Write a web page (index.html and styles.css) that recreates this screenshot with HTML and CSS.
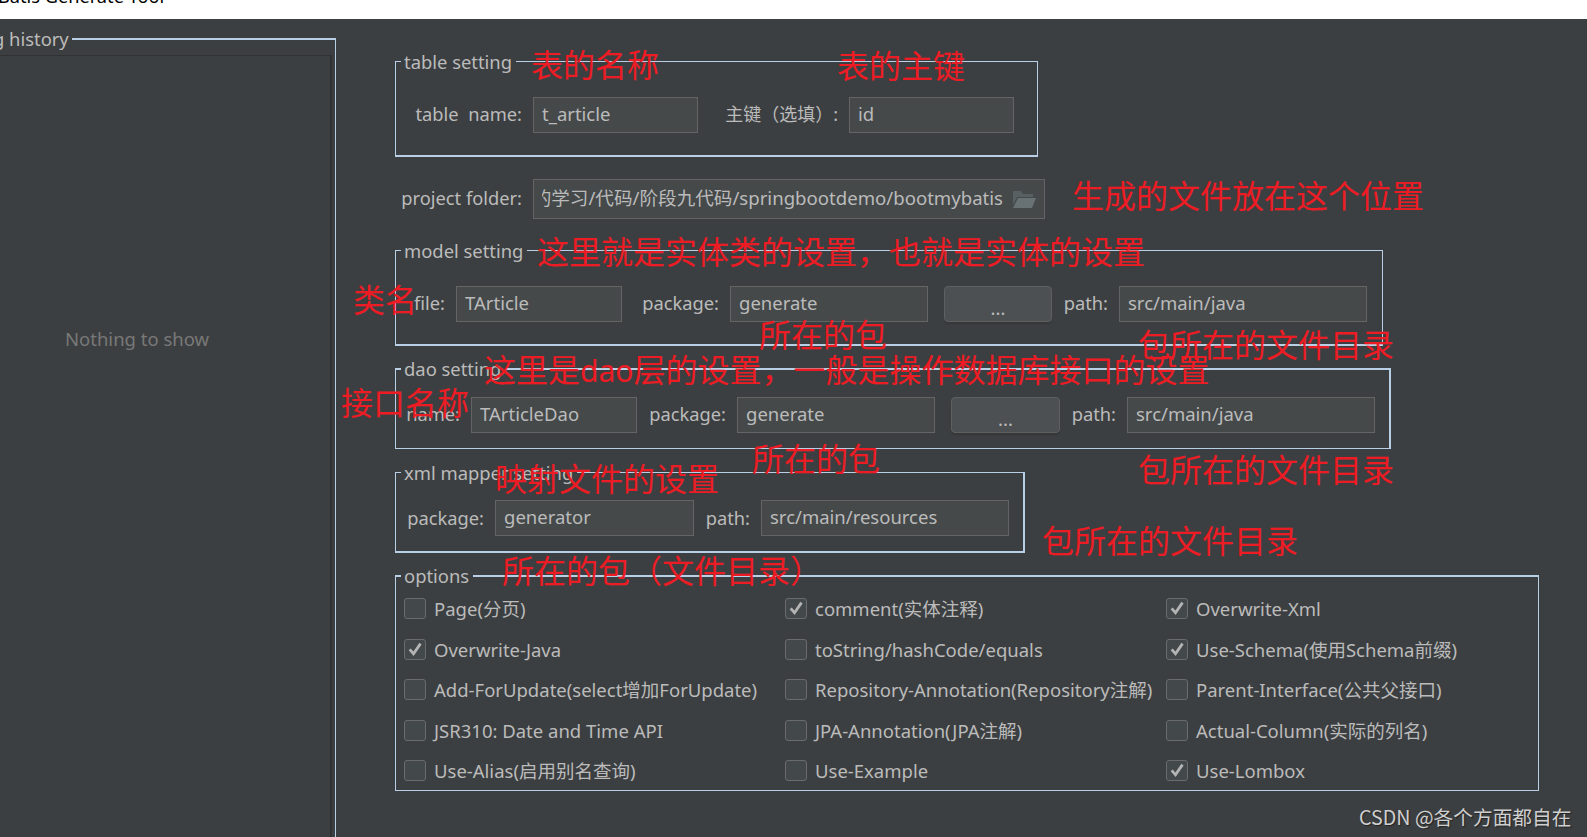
FILE: index.html
```html
<!DOCTYPE html>
<html lang="zh-CN">
<head>
    <meta charset="UTF-8">
    <title>MyBatis Generate Tool</title>
    <link rel="stylesheet" href="styles.css">
</head>
<body>
    <svg width="0" height="0" class="defs">
        <symbol id="tick" viewBox="0 0 21 21">
            <path d="M5.2 10.4 L9 14.8 L16 4.6" fill="none" stroke="#b4b4b4" stroke-width="2.8"/>
        </symbol>
    </svg>

    <div class="titlebar"><span>Batis Generate Tool</span></div>

    <div class="window">
        <div class="sidebar">
            <fieldset class="history">
                <legend>g history</legend>
                <div class="history-list">Nothing to show</div>
            </fieldset>
        </div>

        <div class="main">
            <fieldset class="table-setting">
                <legend>table setting</legend>
                <div class="row">
                    <label>table&nbsp; name:</label>
                    <input type="text" class="name" value="t_article">
                    <label class="key">主键（选填）:</label>
                    <input type="text" class="name" value="id">
                </div>
            </fieldset>

            <div class="row project">
                <label>project folder:</label>
                <div class="folder">
                    <div class="folder-path"><span>的学习/代码/阶段九代码/springbootdemo/bootmybatis</span></div>
                    <svg width="23" height="17" viewBox="0 0 23 17">
                        <path d="M0 14V0h8l2 3h10v3H4z" fill="#596063"/>
                        <path d="M5 7H23l-4 10H0z" fill="#687174"/>
                    </svg>
                </div>
            </div>

            <fieldset class="model-setting">
                <legend>model setting</legend>
                <div class="row">
                    <label>file:</label>
                    <input type="text" class="name" value="TArticle">
                    <label class="package-label">package:</label>
                    <input type="text" class="package" value="generate">
                    <button>...</button>
                    <label class="path-label">path:</label>
                    <input type="text" class="path" value="src/main/java">
                </div>
            </fieldset>

            <fieldset class="dao-setting">
                <legend>dao setting</legend>
                <div class="row">
                    <label>name:</label>
                    <input type="text" class="name" value="TArticleDao">
                    <label class="package-label">package:</label>
                    <input type="text" class="package" value="generate">
                    <button>...</button>
                    <label class="path-label">path:</label>
                    <input type="text" class="path" value="src/main/java">
                </div>
            </fieldset>

            <fieldset class="xml-setting">
                <legend>xml mapper setting</legend>
                <div class="row">
                    <label>package:</label>
                    <input type="text" class="package" value="generator">
                    <label class="path-label">path:</label>
                    <input type="text" class="path" value="src/main/resources">
                </div>
            </fieldset>

            <fieldset class="options">
                <legend>options</legend>
                <div class="option-grid">
                    <div class="option"><span class="box"></span>Page(分页)</div>
                    <div class="option"><span class="box"><svg><use href="#tick"/></svg></span>comment(实体注释)</div>
                    <div class="option"><span class="box"><svg><use href="#tick"/></svg></span>Overwrite-Xml</div>
                    <div class="option"><span class="box"><svg><use href="#tick"/></svg></span>Overwrite-Java</div>
                    <div class="option"><span class="box"></span>toString/hashCode/equals</div>
                    <div class="option"><span class="box"><svg><use href="#tick"/></svg></span>Use-Schema(使用Schema前缀)</div>
                    <div class="option"><span class="box"></span>Add-ForUpdate(select增加ForUpdate)</div>
                    <div class="option"><span class="box"></span>Repository-Annotation(Repository注解)</div>
                    <div class="option"><span class="box"></span>Parent-Interface(公共父接口)</div>
                    <div class="option"><span class="box"></span>JSR310: Date and Time API</div>
                    <div class="option"><span class="box"></span>JPA-Annotation(JPA注解)</div>
                    <div class="option"><span class="box"></span>Actual-Column(实际的列名)</div>
                    <div class="option"><span class="box"></span>Use-Alias(启用别名查询)</div>
                    <div class="option"><span class="box"></span>Use-Example</div>
                    <div class="option"><span class="box"><svg><use href="#tick"/></svg></span>Use-Lombox</div>
                </div>
            </fieldset>
        </div>
    </div>

    <!-- red notes over the form -->
    <div class="note note-table">表的名称</div>
    <div class="note note-key">表的主键</div>
    <div class="note note-project">生成的文件放在这个位置</div>
    <div class="note note-model">这里就是实体类的设置，也就是实体的设置</div>
    <div class="note note-class">类名</div>
    <div class="note note-model-package">所在的包</div>
    <div class="note note-model-path">包所在的文件目录</div>
    <div class="note note-dao">这里是<span class="latin">dao</span>层的设置，一般是操作数据库接口的设置</div>
    <div class="note note-interface">接口名称</div>
    <div class="note note-dao-package">所在的包</div>
    <div class="note note-dao-path">包所在的文件目录</div>
    <div class="note note-xml">映射文件的设置</div>
    <div class="note note-xml-path">包所在的文件目录</div>
    <div class="note note-xml-package">所在的包（文件目录）</div>

    <div class="watermark">CSDN @各个方面都自在</div>
</body>
</html>
```
FILE: styles.css
```css
* {
    box-sizing: border-box;
}
body {
    margin: 0;
    width: 1587px;
    height: 837px;
    overflow: hidden;
    position: relative;
    background: #3c3f41;
    color: #bbbbbb;
    font-family: "Noto Sans", "Noto Sans CJK SC", sans-serif;
    font-size: 18.5px;
    white-space: nowrap;
}
.defs {
    position: absolute;
}
.titlebar {
    height: 19px;
    overflow: hidden;
    background: #ffffff;
    color: #000000;
}
.titlebar span {
    display: block;
    margin-top: -16px;
    margin-left: -2px;
    line-height: 24px;
    font-size: 18.2px;
}
.window {
    display: flex;
    height: 818px;
}
.sidebar {
    width: 336px;
    padding-top: 8px;
    overflow: hidden;
}
fieldset {
    margin: 0;
    padding: 0;
    min-width: 0;
    border: 1px solid #b8cfe5;
}
legend {
    margin-left: 5px;
    padding: 0 4px 0 3px;
    line-height: 25px;
    height: 25px;
    font-size: 18.4px;
}
.history {
    width: 346px;
    height: 840px;
    margin-left: -10px;
    padding: 4px 3px 0 0;
    border-top-width: 2px;
}
.history legend {
    height: 24px;
    line-height: 24px;
    margin-left: 0;
    padding: 0 3px 0 2px;
}
.history-list {
    height: 100%;
    padding: 271px 0 0 73px;
    border: 1px solid #323232;
    border-right-width: 2px;
    color: #787878;
    line-height: 24px;
}
.main {
    padding: 30px 0 0 59px;
}
.row {
    display: flex;
    height: 36px;
    line-height: 34px;
}
label {
    padding-right: 11px;
    font-size: 18.3px;
    text-align: right;
}
input {
    height: 36px;
    padding: 0 8px 3px;
    border: 1px solid #646464;
    background: #45494a;
    color: #bbbbbb;
    font: inherit;
}
button {
    width: 108px;
    height: 36px;
    margin-left: 16px;
    padding: 4px 0 0;
    border: 1px solid #5e6060;
    border-radius: 4px;
    background: #4c5052;
    box-shadow: 0 2px 1px #36393a;
    color: #bbbbbb;
    font: inherit;
}
.name {
    width: 166px;
}
.package {
    width: 198px;
}
.path {
    width: 248px;
}
.path-label {
    width: 67px;
}
.table-setting {
    width: 643px;
    height: 108px;
    padding-top: 23px;
    border-bottom-width: 2px;
}
.table-setting label {
    width: 137px;
}
.table-setting .name {
    width: 165px;
}
.table-setting .key {
    width: 151px;
    font-size: 18px;
}
.project {
    height: 40px;
    margin: 22px 0 19px;
    line-height: 38px;
}
.project label {
    width: 138px;
}
.folder {
    display: flex;
    align-items: center;
    width: 512px;
    height: 40px;
    padding: 0 8px;
    border: 1px solid #646464;
    background: #45494a;
}
.folder-path {
    display: flex;
    justify-content: flex-end;
    width: 462px;
    margin-right: 9px;
    padding-bottom: 2px;
    overflow: hidden;
    font-size: 18.6px;
    line-height: 36px;
}
.folder-path span {
    margin-right: 1px;
}
.model-setting {
    width: 988px;
    height: 108px;
    padding-top: 23px;
    border-bottom-width: 2px;
}
.model-setting label:first-child {
    width: 60px;
}
.model-setting .package-label {
    width: 108px;
}
.dao-setting {
    width: 996px;
    height: 92px;
    margin-top: 11px;
    padding-top: 16px;
    border-top-width: 2px;
    border-right-width: 2px;
}
.dao-setting legend,
.options legend {
    height: 24px;
    line-height: 24px;
}
.dao-setting label:first-child {
    width: 75px;
}
.dao-setting .package-label {
    width: 100px;
}
.dao-setting button {
    width: 109px;
}
.xml-setting {
    width: 630px;
    height: 93px;
    margin-top: 11px;
    padding-top: 15px;
    border-right-width: 2px;
    border-bottom-width: 2px;
}
.xml-setting .row {
    line-height: 36px;
}
.xml-setting input {
    padding-bottom: 2px;
}
.xml-setting label:first-child {
    width: 99px;
}
.xml-setting .package {
    width: 199px;
}
.options {
    width: 1144px;
    height: 227px;
    margin-top: 11px;
    padding: 10px 0 0 8px;
    border-top-width: 2px;
}
.options legend {
    margin-left: -3px;
}
.option-grid {
    display: grid;
    grid-template-columns: 381px 381px 1fr;
    grid-auto-rows: 40.5px;
    height: 190px;
}
.option {
    display: flex;
    height: 21px;
    line-height: 21px;
}
.box {
    width: 22px;
    height: 21px;
    margin-right: 8px;
    border: 1px solid #6b6b6b;
    border-radius: 3px;
    background: #43494a;
}
.box svg {
    display: block;
    width: 22px;
    height: 21px;
    margin: -1px;
}
.note {
    position: absolute;
    color: #ed1c24;
    font-family: "Noto Sans CJK SC", sans-serif;
    font-size: 32px;
    line-height: 32px;
}
.latin {
    font-family: "Noto Sans", sans-serif;
    font-size: 30px;
}
.note-table { left: 531px; top: 47px; }
.note-key { left: 837px; top: 48px; }
.note-project { left: 1072px; top: 178px; }
.note-model { left: 537px; top: 234px; }
.note-class { left: 353px; top: 282px; }
.note-model-package { left: 759px; top: 317px; }
.note-model-path { left: 1138px; top: 327px; }
.note-dao { left: 484px; top: 352px; }
.note-interface { left: 341px; top: 385px; }
.note-dao-package { left: 752px; top: 441px; }
.note-dao-path { left: 1138px; top: 452px; }
.note-xml { left: 495px; top: 461px; }
.note-xml-path { left: 1042px; top: 523px; }
.note-xml-package { left: 502px; top: 553px; }
.watermark {
    position: absolute;
    left: 1359px;
    top: 805px;
    color: #cfcfcf;
    font-family: "Noto Sans CJK SC", sans-serif;
    font-size: 19.7px;
    line-height: 24px;
    text-shadow: 1px 1px 1px #222222;
}
```
